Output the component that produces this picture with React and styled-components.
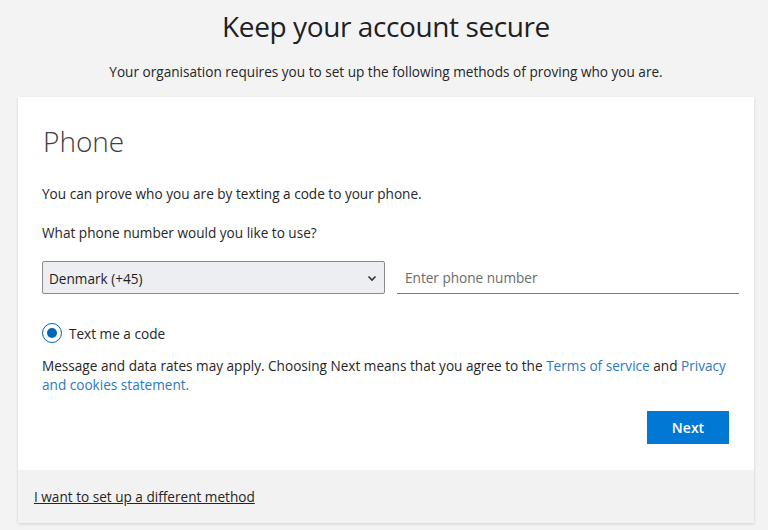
import React from "react";
import styled, { createGlobalStyle } from "styled-components";

const Global = createGlobalStyle`
  html, body { margin: 0; padding: 0; background: #f3f3f3; }
  body { font-family: "Open Sans", "Noto Sans", "Liberation Sans", sans-serif; color: #262626; }
  * { box-sizing: border-box; }
`;

const Page = styled.div`
  width: 768px;
  height: 530px;
  overflow: hidden;
  display: flex;
  flex-direction: column;
  align-items: center;
  padding-left: 4px;
  background: #f3f3f3;
`;

const Title = styled.h1`
  margin: 8px 0 0;
  font-size: 28px;
  font-weight: 400;
  line-height: 36px;
  color: #1f1f1f;
  letter-spacing: -0.4px;
`;

const Subtitle = styled.p`
  margin: 19px 0 0;
  font-size: 13.6px;
  line-height: 18px;
  color: #262626;
`;

const Card = styled.div`
  margin-top: 16px;
  width: 736px;
  background: #fff;
  box-shadow: 0 1px 3px rgba(0, 0, 0, 0.14);
  display: flex;
  flex-direction: column;
`;

const Body = styled.div`
  padding: 26px 15px 26px 24px;
  display: flex;
  flex-direction: column;
`;

const Heading = styled.h2`
  margin: 0;
  font-size: 28px;
  font-weight: 300;
  line-height: 36px;
  color: #404040;
  padding-left: 1px;
`;

const Para = styled.p`
  margin: ${(p) => p.$mt || 0}px 0 0;
  font-size: 13.6px;
  line-height: 19px;
  color: #262626;
`;

const Row = styled.div`
  margin-top: 19px;
  display: flex;
  gap: 12px;
  align-items: flex-end;
`;

const Select = styled.div`
  width: 343px;
  height: 33px;
  border: 1px solid #8a8a8a;
  border-radius: 2px;
  background: #eceef1;
  display: flex;
  align-items: center;
  justify-content: space-between;
  padding: 1px 6px 0 6px;
  font-size: 13.6px;
  color: #1f1f1f;
`;

const Input = styled.div`
  flex: 1;
  height: 33px;
  border-bottom: 1px solid #7a7a7a;
  display: flex;
  align-items: center;
  padding: 1px 8px 0;
  font-size: 13.6px;
  color: #6b6b6b;
`;

const RadioRow = styled.label`
  margin-top: 29px;
  display: flex;
  align-items: center;
  gap: 7px;
  font-size: 13.6px;
  color: #262626;
`;

const Radio = styled.span`
  width: 20px;
  height: 20px;
  border-radius: 50%;
  border: 1px solid #0067b8;
  display: flex;
  align-items: center;
  justify-content: center;
  &::after {
    content: "";
    width: 10px;
    height: 10px;
    border-radius: 50%;
    background: #0067b8;
  }
`;

const Link = styled.a`
  color: #2b79c2;
  text-decoration: none;
`;

const Actions = styled.div`
  margin-top: 17px;
  display: flex;
  justify-content: flex-end;
  padding-right: 10px;
`;

const Button = styled.button`
  width: 82px;
  height: 33px;
  border: none;
  background: #0078d4;
  color: #fff;
  font-family: inherit;
  font-size: 14px;
  font-weight: 600;
`;

const Footer = styled.div`
  background: #f2f2f2;
  height: 53px;
  display: flex;
  align-items: center;
  padding-left: 16px;
`;

const FooterLink = styled.a`
  font-size: 13.6px;
  color: #262626;
  text-decoration: underline;
`;

export default function App() {
  return (
    <Page>
      <Global />
      <Title>Keep your account secure</Title>
      <Subtitle>
        Your organisation requires you to set up the following methods of proving who you are.
      </Subtitle>
      <Card>
        <Body>
          <Heading>Phone</Heading>
          <Para $mt={25}>You can prove who you are by texting a code to your phone.</Para>
          <Para $mt={20}>What phone number would you like to use?</Para>
          <Row>
            <Select>
              <span>Denmark (+45)</span>
              <svg width="12" height="12" viewBox="0 0 12 12">
                <path d="M2.5 4.5 L6 8 L9.5 4.5" fill="none" stroke="#333" strokeWidth="1.6" />
              </svg>
            </Select>
            <Input>Enter phone number</Input>
          </Row>
          <RadioRow>
            <Radio />
            Text me a code
          </RadioRow>
          <Para $mt={13}>
            Message and data rates may apply. Choosing Next means that you agree to the{" "}
            <Link href="#">Terms of service</Link> and{" "}
            <Link href="#">Privacy and cookies statement.</Link>
          </Para>
          <Actions>
            <Button>Next</Button>
          </Actions>
        </Body>
        <Footer>
          <FooterLink href="#">I want to set up a different method</FooterLink>
        </Footer>
      </Card>
    </Page>
  );
}
